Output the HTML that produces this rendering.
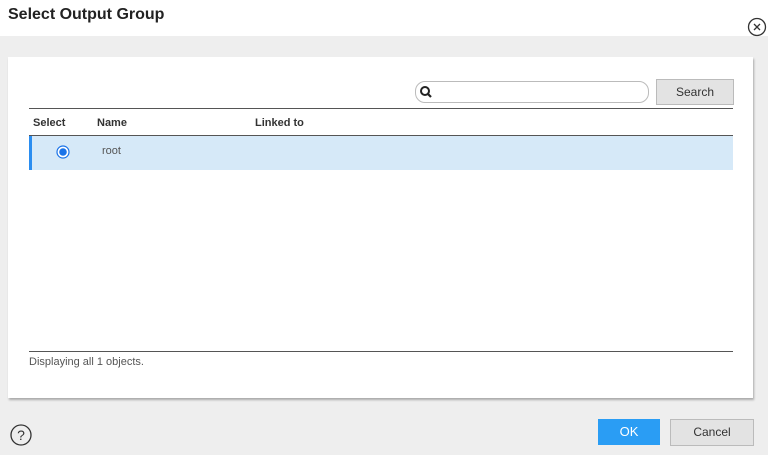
<!DOCTYPE html>
<html><head><style>
body{margin:0;width:768px;height:455px;background:#eeeeee;font-family:"Liberation Sans",sans-serif;position:relative;overflow:hidden}
.hdr{position:absolute;left:0;top:0;width:768px;height:36px;background:#fff}
.title{position:absolute;left:8px;top:6px;font-size:16px;font-weight:bold;color:#222}
.panel{position:absolute;left:8px;top:57px;width:745px;height:341px;background:#fff;box-shadow:1px 2px 2px #aaa}
.abs{position:absolute}
.t{font-size:11px;color:#333}
</style></head><body>
<div class="hdr"><div class="title">Select Output Group</div></div>
<svg class="abs" style="left:747px;top:17px" width="20" height="20"><circle cx="10" cy="10" r="8.5" fill="none" stroke="#333" stroke-width="1.3"/><path d="M7 7L13 13M13 7L7 13" stroke="#333" stroke-width="1.3"/></svg>
<div class="panel"></div>
<div class="abs" style="left:415px;top:81px;width:232px;height:20px;border:1px solid #bbb;border-radius:10px;background:#fff"></div>
<svg class="abs" style="left:419px;top:85px" width="14" height="14"><circle cx="6" cy="6" r="4" fill="none" stroke="#222" stroke-width="2"/><path d="M9 9L12 12" stroke="#222" stroke-width="2.2"/></svg>
<div class="abs" style="left:656px;top:79px;width:76px;height:24px;border:1px solid #bbb;background:#e3e3e3;font-size:12px;color:#333;text-align:center;line-height:24px">Search</div>
<div class="abs" style="left:29px;top:108px;width:704px;height:1px;background:#555"></div>
<div class="abs t" style="left:33px;top:117px;font-weight:bold">Select</div>
<div class="abs t" style="left:97px;top:117px;font-weight:bold">Name</div>
<div class="abs t" style="left:255px;top:117px;font-weight:bold">Linked to</div>
<div class="abs" style="left:29px;top:135px;width:704px;height:1px;background:#555"></div>
<div class="abs" style="left:29px;top:136px;width:704px;height:34px;background:#d6e9f8;border-left:3px solid #2a8df0;box-sizing:border-box"></div>
<svg class="abs" style="left:56px;top:145px" width="14" height="14"><circle cx="7" cy="7" r="6" fill="#fff" stroke="#1a73e8" stroke-width="1.2"/><circle cx="7" cy="7" r="3.8" fill="#1a73e8"/></svg>
<div class="abs t" style="left:102px;top:145px;color:#555">root</div>
<div class="abs" style="left:29px;top:351px;width:704px;height:1px;background:#555"></div>
<div class="abs t" style="left:29px;top:356px;color:#555">Displaying all 1 objects.</div>
<svg class="abs" style="left:10px;top:424px" width="24" height="24"><circle cx="11" cy="11" r="10" fill="none" stroke="#333" stroke-width="1.3"/><text x="11" y="16" text-anchor="middle" font-size="14" font-family="Liberation Sans" fill="#333">?</text></svg>
<div class="abs" style="left:598px;top:419px;width:62px;height:26px;background:#2a9df4;color:#fff;font-size:13px;text-align:center;line-height:26px">OK</div>
<div class="abs" style="left:670px;top:419px;width:82px;height:25px;border:1px solid #bbb;background:#e3e3e3;color:#333;font-size:12px;text-align:center;line-height:25px">Cancel</div>
</body></html>
